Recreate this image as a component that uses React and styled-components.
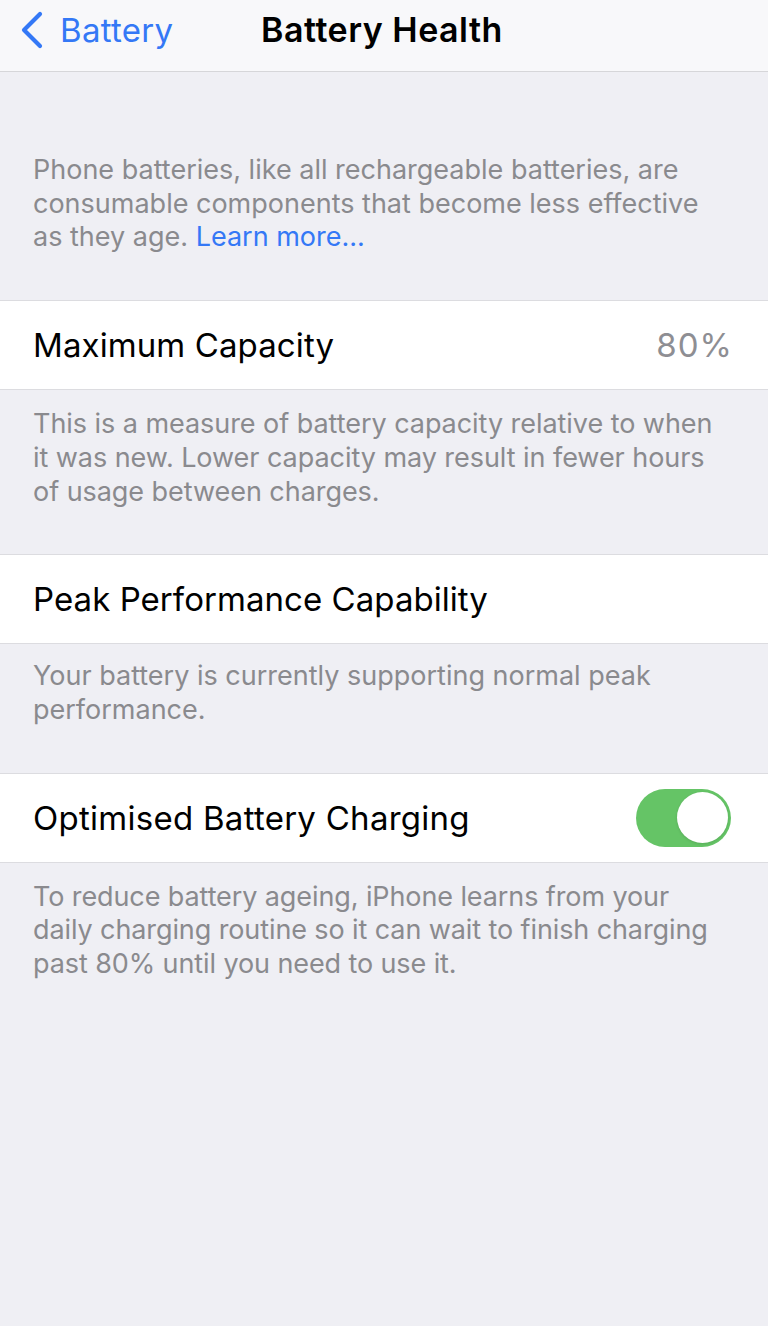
import React from "react";
import styled, { createGlobalStyle } from "styled-components";

const Global = createGlobalStyle`
  html, body { margin: 0; padding: 0; }
  body {
    background: #efeff4;
    font-family: Inter, "Noto Sans", "Liberation Sans", sans-serif;
    -webkit-font-smoothing: antialiased;
  }
`;

const Page = styled.div`
  min-height: 1326px;
  background: #efeff4;
`;

const NavBar = styled.header`
  height: 72px;
  box-sizing: border-box;
  padding-bottom: 12px;
  background: #f8f8fa;
  border-bottom: 1px solid #d6d6d9;
  display: grid;
  grid-template-columns: 1fr auto 1fr;
  align-items: center;
`;

const BackButton = styled.div`
  display: flex;
  align-items: center;
  gap: 16px;
  padding-left: 20px;
  color: #3478f6;
  font-size: 33px;
  letter-spacing: 0.3px;
`;

const Title = styled.h1`
  margin: 0;
  font-size: 34px;
  font-weight: 600;
  color: #000;
  letter-spacing: 0.5px;
  transform: translateX(-2px);
`;

const Footer = styled.p`
  margin: 0;
  padding: ${(p) => p.$top}px 33px ${(p) => p.$bottom}px;
  font-size: 27px;
  line-height: 33.7px;
  color: #8a8a8e;
  letter-spacing: ${(p) => p.$spacing || 0}px;
`;

const Link = styled.span`
  color: #3478f6;
`;

const Cell = styled.div`
  height: 88px;
  background: #fff;
  border-top: 1px solid #dcdce0;
  border-bottom: 1px solid #dcdce0;
  display: flex;
  align-items: center;
  justify-content: space-between;
  padding: 0 37px 0 33px;
`;

const Label = styled.span`
  font-size: 33px;
  color: #000;
  letter-spacing: ${(p) => p.$spacing || 0}px;
`;

const Value = styled.span`
  font-size: 33px;
  color: #8e8e93;
  letter-spacing: 1px;
  margin-right: -2px;
`;

const Toggle = styled.div`
  width: 95px;
  height: 58px;
  border-radius: 29px;
  background: #65c466;
  display: flex;
  align-items: center;
  justify-content: flex-end;
  padding: 0 3px;
  box-sizing: border-box;
`;

const Knob = styled.div`
  width: 51px;
  height: 51px;
  border-radius: 50%;
  background: #fff;
  box-shadow: 0 1px 3px rgba(0, 0, 0, 0.12);
`;

const Chevron = () => (
  <svg width="24" height="38" viewBox="0 0 24 38">
    <path
      d="M20 3 L4 19 L20 35"
      fill="none"
      stroke="#3478f6"
      strokeWidth="4.2"
      strokeLinecap="round"
      strokeLinejoin="round"
    />
  </svg>
);

export default function App() {
  return (
    <>
      <Global />
      <Page>
        <NavBar>
          <BackButton>
            <Chevron />
            <span>Battery</span>
          </BackButton>
          <Title>Battery Health</Title>
          <div />
        </NavBar>

        <Footer $top={81} $bottom={46} $spacing={0}>
          Phone batteries, like all rechargeable batteries, are consumable
          components that become less effective as they age.{" "}
          <Link>Learn more...</Link>
        </Footer>

        <Cell>
          <Label $spacing={0.1}>Maximum Capacity</Label>
          <Value>80%</Value>
        </Cell>

        <Footer $top={17} $bottom={46} $spacing={-0.05}>
          This is a measure of battery capacity relative to when it was new.
          Lower capacity may result in fewer hours of usage between charges.
        </Footer>

        <Cell>
          <Label $spacing={0.05}>Peak Performance Capability</Label>
        </Cell>

        <Footer $top={15} $bottom={46} $spacing={0}>
          Your battery is currently supporting normal peak performance.
        </Footer>

        <Cell>
          <Label $spacing={0.27}>Optimised Battery Charging</Label>
          <Toggle>
            <Knob />
          </Toggle>
        </Cell>

        <Footer $top={17} $bottom={46} $spacing={-0.1}>
          To reduce battery ageing, iPhone learns from your daily charging
          routine so it can wait to finish charging past 80% until you need to
          use it.
        </Footer>
      </Page>
    </>
  );
}
